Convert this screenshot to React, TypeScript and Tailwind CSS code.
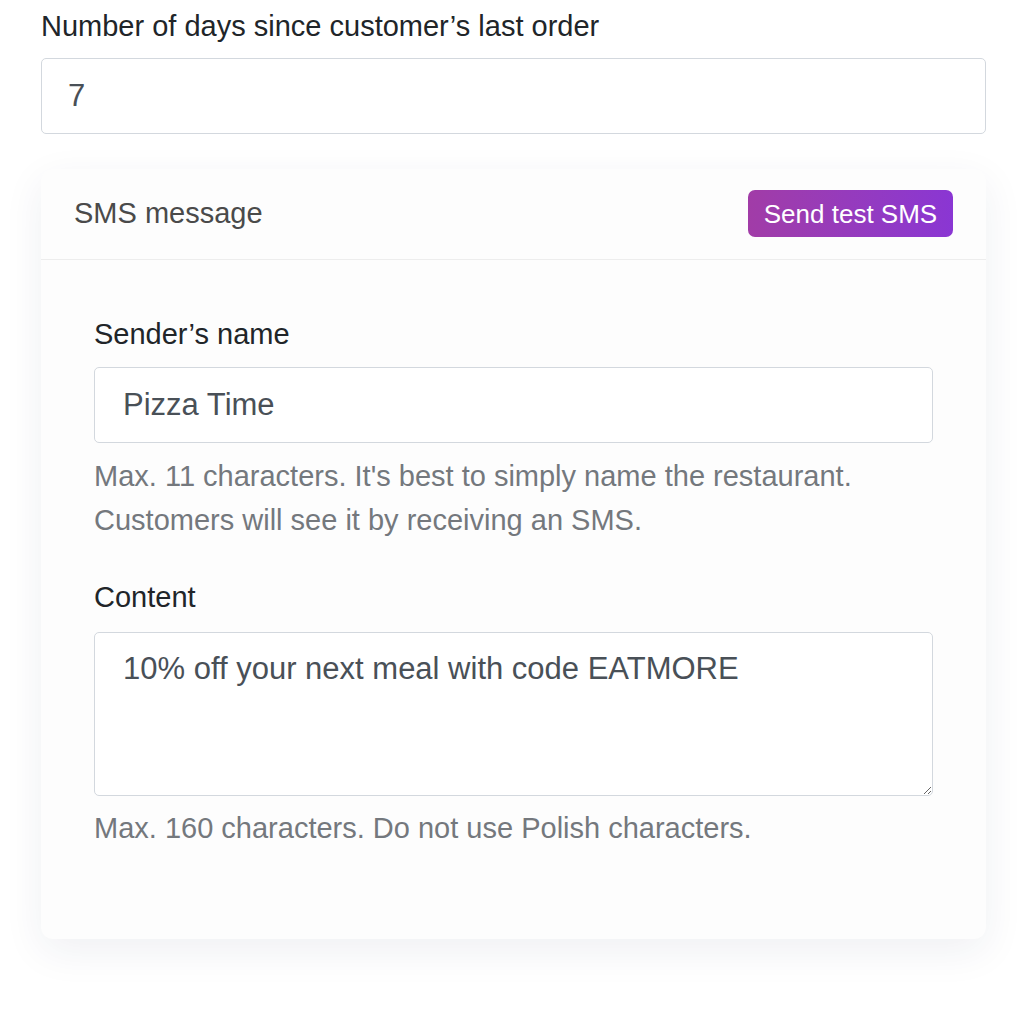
export default function App() {
  return (
    <div className="min-h-screen bg-white font-['Liberation_Sans',Arial,sans-serif] text-[29px] leading-[1.5] text-[#212529]">
      <div className="ml-[41px] w-[945px] pt-[5px]">
        <label className="block">Number of days since customer’s last order</label>
        <input
          defaultValue="7"
          className="mt-[9px] block h-[76px] w-full rounded-[5px] border border-[#d3d8de] bg-white px-[26px] text-[31px] text-[#495057] outline-none"
        />

        <div className="mt-[35px] rounded-[12px] bg-[#fdfdfd] shadow-[0_12px_40px_rgba(30,40,80,0.07)]">
          <div className="flex h-[91px] items-center justify-between border-b border-[#ededed] px-[33px]">
            <span className="text-[#4a4a4a]">SMS message</span>
            <button className="h-[47px] w-[205px] rounded-[7px] bg-gradient-to-r from-[#a13ca7] to-[#8a36d3] text-[26px] leading-none text-white">
              Send test SMS
            </button>
          </div>

          <div className="px-[53px] pb-[89px] pt-[53px]">
            <label className="block">Sender’s name</label>
            <input
              defaultValue="Pizza Time"
              className="mt-[11px] block h-[76px] w-full rounded-[5px] border border-[#d3d8de] bg-white px-[28px] text-[31px] text-[#495057] outline-none"
            />
            <p className="mt-[12px] text-[#74787d]">
              Max. 11 characters. It's best to simply name the restaurant.
              <br />
              Customers will see it by receiving an SMS.
            </p>

            <label className="mt-[34px] block">Content</label>
            <textarea
              defaultValue="10% off your next meal with code EATMORE"
              className="mt-[12px] block h-[164px] w-full rounded-[5px] border border-[#d3d8de] bg-white px-[28px] py-[13px] text-[31px] text-[#495057] outline-none"
            />
            <p className="mt-[11px] text-[#74787d]">Max. 160 characters. Do not use Polish characters.</p>
          </div>
        </div>
      </div>
    </div>
  );
}
